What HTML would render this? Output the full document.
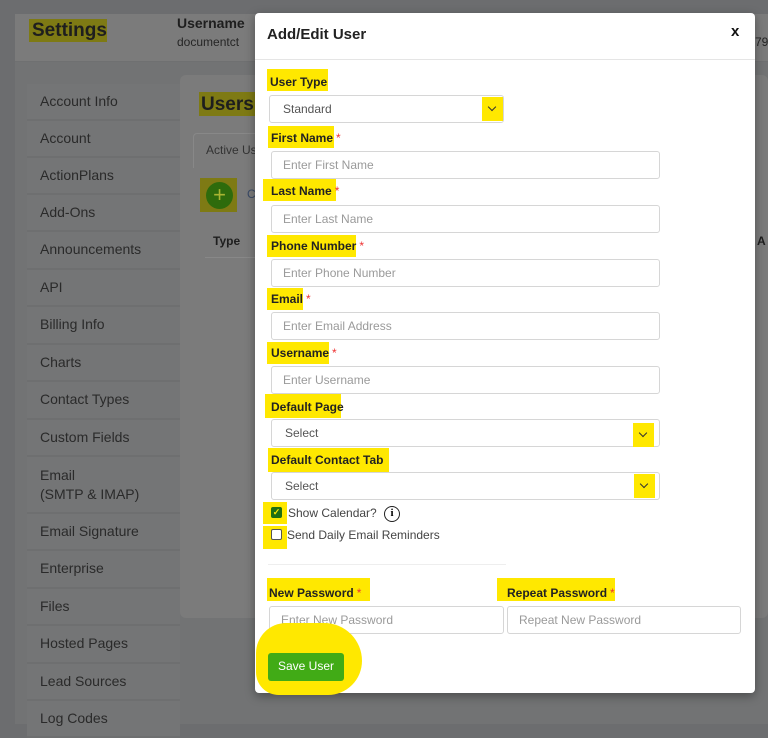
<!DOCTYPE html>
<html><head><meta charset="utf-8"><style>
*{box-sizing:border-box;margin:0;padding:0}
body{width:768px;height:724px;overflow:hidden;background:#6c6d6f;font-family:"Liberation Sans",Arial,sans-serif;position:relative}
.a{position:absolute}
.side{position:absolute;left:27px;width:153px;background:#747576;color:#2a2a2a;font-size:14px;padding-left:13px;border-bottom:2px solid #6e6f70}
.hl{position:absolute;background:#ffe800}
.dhl{position:absolute;background:#7e7a14}
.lbl{position:absolute;font-size:12px;font-weight:bold;color:#222}
.req{color:#e33;font-weight:normal;margin-left:3px}
.inp{position:absolute;border:1px solid #d6d6d6;border-radius:3px;background:#fff;font-size:12px;color:#9a9a9a;padding-left:11px;line-height:26px;height:28px}
.sel{color:#555}
.chev{position:absolute;background:#ffe800;width:21px;height:24px}
.chev:after{content:"";position:absolute;left:7px;top:7px;width:5px;height:5px;border-right:1.6px solid #333;border-bottom:1.6px solid #333;transform:rotate(45deg)}
</style></head><body>
<div class="a" style="left:15px;top:14px;width:753px;height:710px;background:#727374"></div>
<div class="a" style="left:15px;top:14px;width:753px;height:48px;background:#7b7b7b;border-bottom:1px solid #6f7071"></div>
<div class="dhl" style="left:29px;top:19px;width:78px;height:23px"></div>
<div class="a" style="left:32px;top:20px;font-size:19px;font-weight:bold;color:#1e1e1e">Settings</div>
<div class="a" style="left:177px;top:15px;font-size:14px;font-weight:bold;color:#1e1e1e">Username</div>
<div class="a" style="left:177px;top:35px;font-size:12px;color:#252525">documentct</div>
<div class="a" style="left:755px;top:35px;font-size:12px;color:#252525">79</div>

<div class="side" style="top:84px;height:37px;line-height:34px">Account Info</div>
<div class="side" style="top:121px;height:37px;line-height:34px">Account</div>
<div class="side" style="top:158px;height:37px;line-height:34px">ActionPlans</div>
<div class="side" style="top:195px;height:37px;line-height:34px">Add-Ons</div>
<div class="side" style="top:232px;height:38px;line-height:35px">Announcements</div>
<div class="side" style="top:270px;height:37px;line-height:34px">API</div>
<div class="side" style="top:307px;height:38px;line-height:35px">Billing Info</div>
<div class="side" style="top:345px;height:37px;line-height:34px">Charts</div>
<div class="side" style="top:382px;height:38px;line-height:35px">Contact Types</div>
<div class="side" style="top:420px;height:37px;line-height:34px">Custom Fields</div>
<div class="side" style="top:457px;height:57px;line-height:19px;padding-top:9px">Email<br>(SMTP &amp; IMAP)</div>
<div class="side" style="top:514px;height:37px;line-height:34px">Email Signature</div>
<div class="side" style="top:551px;height:38px;line-height:35px">Enterprise</div>
<div class="side" style="top:589px;height:37px;line-height:34px">Files</div>
<div class="side" style="top:626px;height:38px;line-height:35px">Hosted Pages</div>
<div class="side" style="top:664px;height:37px;line-height:34px">Lead Sources</div>
<div class="side" style="top:701px;height:37px;line-height:34px">Log Codes</div>

<div class="a" style="left:180px;top:75px;width:588px;height:543px;background:#7b7b7b;border-radius:6px"></div>
<div class="dhl" style="left:199px;top:92px;width:56px;height:24px"></div>
<div class="a" style="left:201px;top:94px;font-size:19px;font-weight:bold;color:#1e1e1e">Users</div>
<div class="a" style="left:193px;top:133px;width:70px;height:35px;border:1px solid #888;border-bottom:none;border-radius:4px 4px 0 0"></div>
<div class="a" style="left:206px;top:143px;font-size:12px;color:#333">Active Us</div>
<div class="dhl" style="left:200px;top:178px;width:37px;height:34px"></div>
<div class="a" style="left:206px;top:182px;width:27px;height:27px;border-radius:50%;background:#2e6b0c;color:#a8b432;font-size:22px;line-height:26px;text-align:center">+</div>
<div class="a" style="left:247px;top:187px;font-size:12px;color:#3a4a66">C</div>
<div class="a" style="left:213px;top:234px;font-size:12px;font-weight:bold;color:#1e1e1e">Type</div>
<div class="a" style="left:205px;top:257px;width:60px;height:1px;background:#888"></div>
<div class="a" style="left:757px;top:234px;font-size:12px;font-weight:bold;color:#1e1e1e">A</div>

<!-- modal -->
<div class="a" style="left:255px;top:13px;width:500px;height:680px;background:#fff;border-radius:4px;box-shadow:0 3px 10px rgba(0,0,0,.35)"></div>
<div class="a" style="left:255px;top:59px;width:500px;height:1px;background:#e5e5e5"></div>
<div class="a" style="left:267px;top:26px;font-size:15px;font-weight:bold;color:#222">Add/Edit User</div>
<div class="a" style="left:731px;top:23px;font-size:15px;font-weight:bold;color:#111">x</div>

<div class="hl" style="left:267px;top:69px;width:61px;height:22px"></div>
<div class="lbl" style="left:270px;top:75px">User Type</div>
<div class="inp sel" style="left:269px;top:95px;width:235px;padding-left:13px">Standard</div>
<div class="chev" style="left:482px;top:97px"></div>

<div class="hl" style="left:268px;top:126px;width:66px;height:22px"></div>
<div class="lbl" style="left:271px;top:131px">First Name<span class="req">*</span></div>
<div class="inp" style="left:271px;top:151px;width:389px">Enter First Name</div>

<div class="hl" style="left:263px;top:179px;width:73px;height:22px"></div>
<div class="lbl" style="left:271px;top:184px">Last Name<span class="req">*</span></div>
<div class="inp" style="left:271px;top:205px;width:389px">Enter Last Name</div>

<div class="hl" style="left:267px;top:235px;width:89px;height:22px"></div>
<div class="lbl" style="left:271px;top:239px">Phone Number<span class="req">*</span></div>
<div class="inp" style="left:271px;top:259px;width:389px">Enter Phone Number</div>

<div class="hl" style="left:267px;top:288px;width:36px;height:22px"></div>
<div class="lbl" style="left:271px;top:292px">Email<span class="req">*</span></div>
<div class="inp" style="left:271px;top:312px;width:389px">Enter Email Address</div>

<div class="hl" style="left:267px;top:342px;width:62px;height:22px"></div>
<div class="lbl" style="left:271px;top:346px">Username<span class="req">*</span></div>
<div class="inp" style="left:271px;top:366px;width:389px">Enter Username</div>

<div class="hl" style="left:265px;top:394px;width:76px;height:24px"></div>
<div class="lbl" style="left:271px;top:400px">Default Page</div>
<div class="inp sel" style="left:271px;top:419px;width:389px;padding-left:13px">Select</div>
<div class="chev" style="left:633px;top:423px"></div>

<div class="hl" style="left:268px;top:448px;width:121px;height:24px"></div>
<div class="lbl" style="left:271px;top:453px">Default Contact Tab</div>
<div class="inp sel" style="left:271px;top:472px;width:389px;padding-left:13px">Select</div>
<div class="chev" style="left:634px;top:474px"></div>

<div class="hl" style="left:263px;top:502px;width:24px;height:22px"></div>
<div class="a" style="left:271px;top:507px;width:11px;height:11px;background:#1f6e12;border-radius:2px;color:#ffe800;font-size:9px;line-height:11px;text-align:center;font-weight:bold">✓</div>
<div class="a" style="left:288px;top:506px;font-size:12px;color:#444">Show Calendar?</div>
<div class="a" style="left:384px;top:506px;width:16px;height:16px;border:1.5px solid #222;border-radius:50%;font-size:11px;font-weight:bold;line-height:13px;text-align:center;font-family:'Liberation Serif',serif">i</div>
<div class="hl" style="left:263px;top:526px;width:24px;height:23px"></div>
<div class="a" style="left:271px;top:529px;width:11px;height:11px;border:1px solid #555;border-radius:2px;background:#fff"></div>
<div class="a" style="left:287px;top:528px;font-size:12px;color:#444">Send Daily Email Reminders</div>

<div class="a" style="left:268px;top:564px;width:238px;height:1px;background:#eee"></div>

<div class="hl" style="left:267px;top:578px;width:103px;height:23px"></div>
<div class="lbl" style="left:269px;top:586px">New Password<span class="req">*</span></div>
<div class="hl" style="left:497px;top:578px;width:118px;height:23px"></div>
<div class="lbl" style="left:507px;top:586px">Repeat Password<span class="req">*</span></div>
<div class="inp" style="left:269px;top:606px;width:235px">Enter New Password</div>
<div class="inp" style="left:507px;top:606px;width:234px">Repeat New Password</div>

<div class="a" style="left:256px;top:623px;width:106px;height:72px;background:#ffe800;border-radius:40px 50px 45px 30px"></div>
<div class="a" style="left:268px;top:653px;width:76px;height:28px;background:#41ab16;border-radius:3px;color:#fff;font-size:12px;line-height:27px;text-align:center">Save User</div>
</body></html>
